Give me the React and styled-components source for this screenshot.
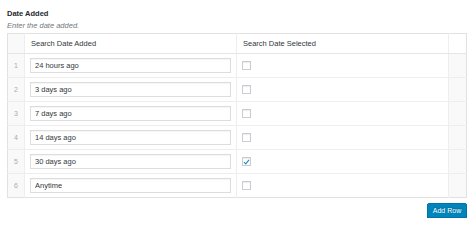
import React from "react";
import styled, { createGlobalStyle } from "styled-components";

const rows = [
  { value: "24 hours ago", checked: false },
  { value: "3 days ago", checked: false },
  { value: "7 days ago", checked: false },
  { value: "14 days ago", checked: false },
  { value: "30 days ago", checked: true },
  { value: "Anytime", checked: false },
];

const GlobalStyle = createGlobalStyle`
  html, body {
    margin: 0;
    background: #ffffff;
  }
  body {
    font-family: "Liberation Sans", Arial, sans-serif;
    color: #23282d;
  }
`;

const Field = styled.div`
  padding: 9px 7px 0 7px;
  width: 460px;
`;

const Label = styled.div`
  font-size: 7.5px;
  font-weight: bold;
  line-height: 9px;
  color: #23282d;
`;

const Instructions = styled.div`
  margin-top: 3px;
  font-size: 7.5px;
  font-style: italic;
  line-height: 9px;
  color: #72777c;
`;

const Table = styled.table`
  margin-top: 3px;
  width: 460px;
  border-collapse: collapse;
  border: 1px solid #e1e1e1;
  table-layout: fixed;
`;

const HeadCell = styled.th`
  height: 19px;
  padding: 0 6px;
  text-align: left;
  font-weight: normal;
  font-size: 7.5px;
  color: #32373c;
  border-left: 1px solid #eeeeee;
  border-bottom: 1px solid #e6e6e6;
  background: #ffffff;
  &:first-child {
    border-left: 0;
  }
`;

const Row = styled.tr`
  & + & td {
    border-top: 1px solid #eeeeee;
  }
`;

const NumCell = styled.td`
  width: 16px;
  height: 23px;
  padding: 0;
  text-align: center;
  font-size: 7px;
  color: #aaaaaa;
  background: #f9f9f9;
`;

const Cell = styled.td`
  padding: 0 5px;
  height: 23px;
  border-left: 1px solid #eeeeee;
  vertical-align: middle;
`;

const SideCell = styled.td`
  width: 17px;
  padding: 0;
  background: #f9f9f9;
  border-left: 1px solid #eeeeee;
`;

const SideHead = styled(HeadCell)`
  width: 17px;
  padding: 0;
`;

const NumHead = styled(HeadCell)`
  width: 16px;
  padding: 0;
  background: #f9f9f9;
`;

const TextInput = styled.input`
  box-sizing: border-box;
  display: block;
  width: 100%;
  height: 15px;
  margin: 0;
  padding: 0 4px;
  border: 1px solid #dddddd;
  border-radius: 0;
  box-shadow: inset 0 1px 1px rgba(0, 0, 0, 0.04);
  font-family: "Liberation Sans", Arial, sans-serif;
  font-size: 7.5px;
  color: #32373c;
  background: #ffffff;
  outline: none;
`;

const Box = styled.span`
  box-sizing: border-box;
  display: flex;
  align-items: center;
  justify-content: center;
  width: 9px;
  height: 9px;
  border: 1px solid #c9cdd1;
  background: #ffffff;
  box-shadow: inset 0 1px 1px rgba(0, 0, 0, 0.08);
`;

const Footer = styled.div`
  display: flex;
  justify-content: flex-end;
  margin-top: 5px;
`;

const Button = styled.button`
  box-sizing: border-box;
  height: 15px;
  width: 40px;
  padding: 0;
  border: 1px solid #0073aa;
  border-radius: 2px;
  background: #0085ba;
  box-shadow: 0 1px 0 #006799;
  color: #ffffff;
  font-family: "Liberation Sans", Arial, sans-serif;
  font-size: 7px;
  text-shadow: 0 -1px 1px #006799;
`;

const Check = () => (
  <svg width="8" height="8" viewBox="0 0 8 8">
    <path d="M1.2 4.2 L3.1 6.1 L6.9 1.6" fill="none" stroke="#1e8cbe" strokeWidth="1.3" />
  </svg>
);

export default function App() {
  return (
    <>
      <GlobalStyle />
      <Field>
        <Label>Date Added</Label>
        <Instructions>Enter the date added.</Instructions>
        <Table>
          <thead>
            <tr>
              <NumHead />
              <HeadCell>Search Date Added</HeadCell>
              <HeadCell>Search Date Selected</HeadCell>
              <SideHead />
            </tr>
          </thead>
          <tbody>
            {rows.map((row, i) => (
              <Row key={i}>
                <NumCell>{i + 1}</NumCell>
                <Cell>
                  <TextInput defaultValue={row.value} />
                </Cell>
                <Cell>
                  <Box>{row.checked && <Check />}</Box>
                </Cell>
                <SideCell />
              </Row>
            ))}
          </tbody>
        </Table>
        <Footer>
          <Button>Add Row</Button>
        </Footer>
      </Field>
    </>
  );
}
